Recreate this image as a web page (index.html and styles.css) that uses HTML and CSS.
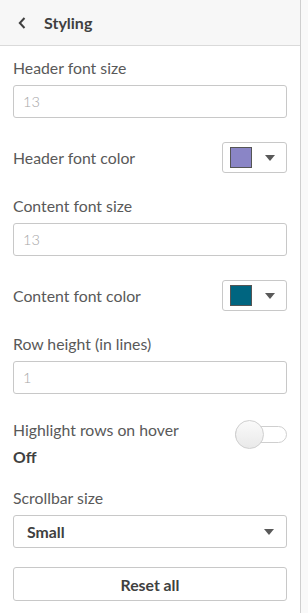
FILE: index.html
```html
<!DOCTYPE html>
<html>
<head>
<meta charset="utf-8">
<link rel="stylesheet" href="styles.css">
</head>
<body>
<div class="frame">
  <div class="panel">
    <div class="head">
      <svg class="back" width="8" height="12" viewBox="0 0 8 12"><path d="M6.5 1 L1.8 6 L6.5 11" fill="none" stroke="#404040" stroke-width="2"/></svg>
      <span class="title">Styling</span>
    </div>
    <div class="body">
      <div class="field">
        <div class="label">Header font size</div>
        <div class="input">13</div>
      </div>
      <div class="row color-row">
        <div class="label">Header font color</div>
        <div class="color-btn"><span class="swatch purple"></span><span class="tri"></span></div>
      </div>
      <div class="field">
        <div class="label">Content font size</div>
        <div class="input">13</div>
      </div>
      <div class="row color-row">
        <div class="label">Content font color</div>
        <div class="color-btn"><span class="swatch teal"></span><span class="tri"></span></div>
      </div>
      <div class="field">
        <div class="label">Row height (in lines)</div>
        <div class="input">1</div>
      </div>
      <div class="row toggle-row">
        <div>
          <div class="label">Highlight rows on hover</div>
          <div class="state">Off</div>
        </div>
        <div class="switch"><span class="knob"></span></div>
      </div>
      <div class="field">
        <div class="label">Scrollbar size</div>
        <div class="select"><span>Small</span><span class="tri"></span></div>
      </div>
      <div class="btn">Reset all</div>
    </div>
  </div>
  <div class="gutter"></div>
</div>
</body>
</html>
```
FILE: styles.css
```css
* { box-sizing: border-box; }
html, body { margin: 0; padding: 0; }
body {
  font-family: "Lato", "Source Sans Pro", "Noto Sans", sans-serif;
  color: #595959;
  background: #f7f7f7;
  width: 308px;
  height: 613px;
  overflow: hidden;
}
.frame { display: flex; height: 613px; }
.panel {
  width: 301px;
  background: #fff;
  border-right: 1px solid #cfcfcf;
  display: flex;
  flex-direction: column;
}
.gutter { flex: 1; background: #f9f9f9; }
.head {
  height: 46px;
  background: #f7f7f7;
  border-bottom: 1px solid #dadada;
  display: flex;
  align-items: center;
  padding-left: 18px;
  gap: 18px;
}
.back { display: block; }
.title { font-weight: 700; font-size: 16px; color: #404040; }
.body { padding: 12px 13px 0 13px; display: flex; flex-direction: column; }
.label { font-size: 15.8px; line-height: 20px; color: #595959; }
.field { display: flex; flex-direction: column; gap: 7px; }
.input {
  height: 33px;
  border: 1px solid #c8c8c8;
  border-radius: 3px;
  padding: 0 9px;
  font-size: 14.5px;
  line-height: 31px;
  color: #a6a6a6;
  font-weight: 300;
}
.row { display: flex; justify-content: space-between; align-items: center; }
.color-row { margin: 24px 0 23px; }
.color-btn {
  width: 65px; height: 31px;
  border: 1px solid #c8c8c8;
  border-radius: 3px;
  display: flex; align-items: center;
  padding-left: 7px;
  gap: 13px;
}
.swatch { width: 22px; height: 21px; border: 1px solid #555; display: block; }
.purple { background: #8a85c6; }
.teal { background: #006580; }
.tri {
  width: 0; height: 0;
  border-left: 5px solid transparent;
  border-right: 5px solid transparent;
  border-top: 6px solid #595959;
}
.toggle-row { margin: 26px 0 21px; align-items: flex-start; }
.state { font-size: 15.8px; font-weight: 700; color: #404040; margin-top: 7px; line-height: 20px; }
.switch {
  position: relative;
  width: 52px; height: 17px;
  margin-top: 6px;
  border: 1px solid #cfcfcf;
  border-radius: 9px;
  background: #fff;
}
.knob {
  position: absolute;
  left: -1px; top: -7px;
  width: 29px; height: 29px;
  border-radius: 50%;
  border: 1px solid #cfcfcf;
  background: linear-gradient(#fafafa, #e9e9e9);
}
.select {
  height: 33px;
  border: 1px solid #c8c8c8;
  border-radius: 3px;
  display: flex; align-items: center; justify-content: space-between;
  padding: 0 12px 0 13px;
  font-size: 15.8px; font-weight: 700; color: #404040;
}
.btn {
  margin-top: 19px;
  height: 34px;
  border: 1px solid #c8c8c8;
  border-radius: 3px;
  display: flex; align-items: center; justify-content: center;
  font-size: 15.8px; font-weight: 700; color: #404040;
}
```
